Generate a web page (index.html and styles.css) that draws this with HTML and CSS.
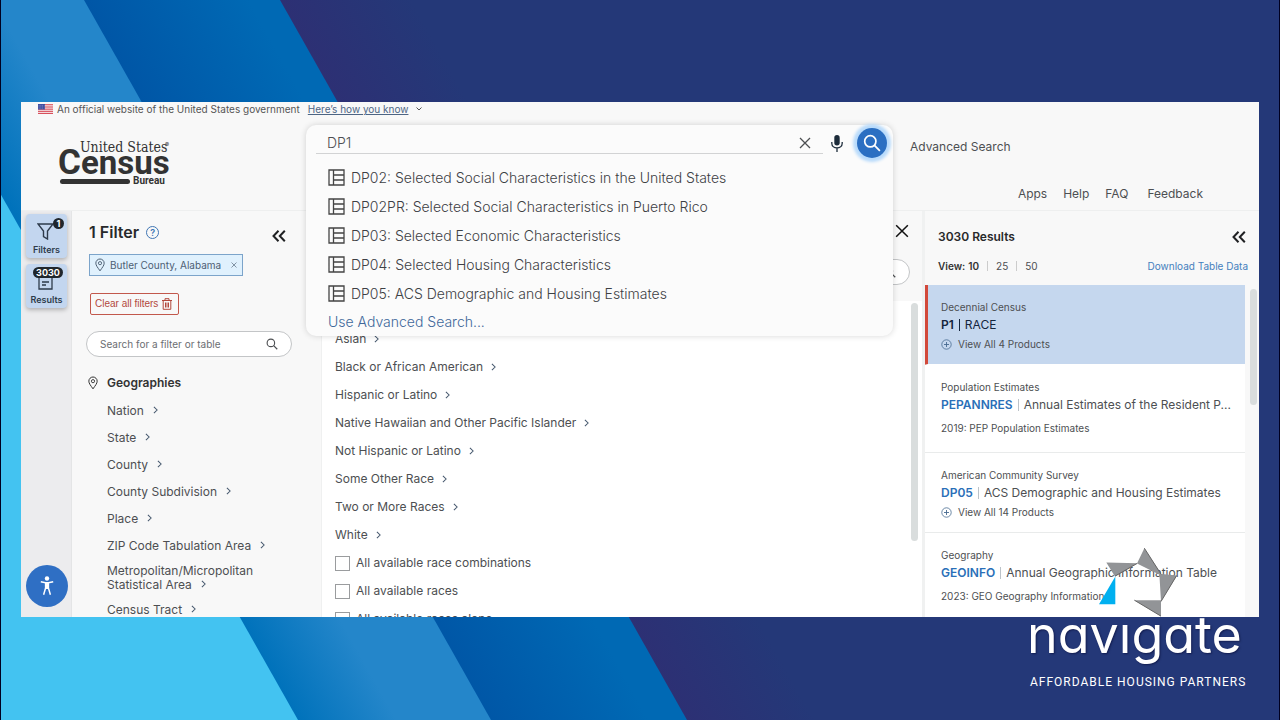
FILE: index.html
```html
<!DOCTYPE html>
<html lang="en">
<head>
<meta charset="utf-8">
<title>Census data search</title>
<link rel="stylesheet" href="styles.css">
</head>
<body>
<svg class="defs" aria-hidden="true">
  <symbol id="chev" viewBox="0 0 6 10"><path d="M1 1l4 4-4 4" fill="none" stroke="currentColor" stroke-width="1.3"/></symbol>
  <symbol id="pin" viewBox="0 0 12 16"><path d="M6 15C3.200 11 1 8.500 1 5.800a5 5 0 0 1 10 0C11 8.500 8.800 11 6 15z" fill="none" stroke="currentColor" stroke-width="1.200"/><circle cx="6" cy="5.800" r="1.900" fill="none" stroke="currentColor" stroke-width="1.100"/></symbol>
  <symbol id="lens" viewBox="0 0 16 16"><circle cx="6.500" cy="6.500" r="5" fill="none" stroke="currentColor" stroke-width="1.500"/><path d="M10.200 10.200L15 15" stroke="currentColor" stroke-width="1.600"/></symbol>
  <symbol id="tbl" viewBox="0 0 17 17"><path d="M1 1h15v15H1zM5.500 1v15M5.500 6H16M5.500 11H16" fill="none" stroke="currentColor" stroke-width="1.300"/></symbol>
  <symbol id="dbl" viewBox="0 0 14 12"><path d="M6.500 .8L1.500 6l5 5.200M12.800 .8L7.800 6l5 5.200" fill="none" stroke="currentColor" stroke-width="2"/></symbol>
  <symbol id="x" viewBox="0 0 12 12"><path d="M1 1l10 10M11 1L1 11" stroke="currentColor" stroke-width="1.300"/></symbol>
  <symbol id="plus" viewBox="0 0 11 11"><circle cx="5.500" cy="5.500" r="4.700" fill="none" stroke="currentColor" stroke-width=".8"/><path d="M5.500 3v5M3 5.500h5" stroke="currentColor" stroke-width=".9"/></symbol>
</svg>
<svg class="backdrop" viewBox="0 0 1280 720" preserveAspectRatio="none" aria-hidden="true">
  <defs>
    <linearGradient id="g1" gradientUnits="userSpaceOnUse" x1="270" y1="670" x2="345" y2="628"><stop offset="0" stop-color="#0072bb"/><stop offset="1" stop-color="#2486ca"/></linearGradient>
    <linearGradient id="g2" gradientUnits="userSpaceOnUse" x1="84" y1="0" x2="210" y2="-70"><stop offset="0" stop-color="#0056a6"/><stop offset="1" stop-color="#0069b4"/></linearGradient>
    <linearGradient id="g3" gradientUnits="userSpaceOnUse" x1="280" y1="0" x2="380" y2="-56"><stop offset="0" stop-color="#2d3074"/><stop offset="1" stop-color="#243878"/></linearGradient>
  </defs>
  <path fill="url(#g3)" d="M0 0h1280v720H0z"/>
  <path fill="url(#g2)" d="M0 0h280l407 720H0z"/>
  <path fill="url(#g1)" d="M0 0h84l407 720H0z"/>
  <path fill="#43c3f1" d="M0 193l298 527H0z"/>
  <path fill="#000020" d="M0 0h1v720H0zM1279 0h1v720h-1z"/>
</svg>

<div class="app">
  <header class="header">
    <div class="banner">
      <svg class="flag" viewBox="0 0 15 10"><path fill="#f3d9dc" d="M0 0h15v10H0z"/><path stroke="#d8505c" d="M0 .7h15M0 3h15M0 5.200h15M0 7.400h15M0 9.500h15"/><path fill="#3f4da0" d="M0 0h7v5.500H0z"/><path stroke="#a9afd8" stroke-width=".6" stroke-dasharray=".8 1" d="M.7 1.400h6M.7 2.800h6M.7 4.200h6"/></svg>
      <span>An official website of the United States government</span>
      <a href="#">Here’s how you know</a>
      <svg class="down" viewBox="0 0 6 4"><path d="M.5 .5L3 3 5.500 .5" fill="none" stroke="currentColor"/></svg>
    </div>
    <div class="masthead">
      <svg class="census" viewBox="0 0 116 50" role="img" aria-label="United States Census Bureau">
        <text x="21" y="14" class="c-top">United States</text><text x="106" y="9" class="c-reg">®</text>
        <text x="-1" y="36" class="c-main"><tspan class="c-cap">C</tspan>ensus</text>
        <rect x="1" y="41" width="70" height="5" rx="2.500"/>
        <text x="74" y="46" class="c-small">Bureau</text>
      </svg>
      <div class="search-slot">
        <form class="search" role="search">
          <div class="search-row">
            <div class="field">
              <input type="text" value="DP1" aria-label="Search">
              <button type="button" class="clear" aria-label="Clear"><svg><use href="#x"/></svg></button>
            </div>
            <button type="button" class="mic" aria-label="Voice search"><svg viewBox="0 0 12 17"><rect x="3.300" y="0" width="5.400" height="10.500" rx="2.700"/><path d="M.8 7v1.200c0 6.200 10.400 6.200 10.400 0V7M6 13v4" fill="none" stroke="currentColor" stroke-width="1.300"/></svg></button>
            <button type="submit" class="go" aria-label="Search"><svg><use href="#lens"/></svg></button>
          </div>
          <ul class="suggest">
            <li><button type="button"><svg><use href="#tbl"/></svg>DP02: Selected Social Characteristics in the United States</button></li>
            <li><button type="button"><svg><use href="#tbl"/></svg>DP02PR: Selected Social Characteristics in Puerto Rico</button></li>
            <li><button type="button"><svg><use href="#tbl"/></svg>DP03: Selected Economic Characteristics</button></li>
            <li><button type="button"><svg><use href="#tbl"/></svg>DP04: Selected Housing Characteristics</button></li>
            <li><button type="button"><svg><use href="#tbl"/></svg>DP05: ACS Demographic and Housing Estimates</button></li>
          </ul>
          <a class="adv" href="#">Use Advanced Search...</a>
        </form>
      </div>
      <div class="links">
        <a href="#">Advanced Search</a>
        <nav><a href="#">Apps</a><a href="#">Help</a><a href="#">FAQ</a><a class="feedback" href="#">Feedback</a></nav>
      </div>
    </div>
  </header>

  <main class="columns">
    <div class="rail">
      <button type="button" class="tab"><svg class="funnel" viewBox="0 0 17 17"><path d="M1 1h15l-5.500 7v8l-4-2.500V8z" fill="none" stroke="currentColor" stroke-width="1.400"/></svg><span class="count one">1</span>Filters</button>
      <button type="button" class="tab"><svg class="sheet" viewBox="0 0 15 16"><path d="M1 1h13v14H1zM4 8h7M4 11h4" fill="none" stroke="currentColor" stroke-width="1.300"/></svg><span class="count many">3030</span>Results</button>
      <button type="button" class="a11y" aria-label="Accessibility"><svg viewBox="0 0 14 20"><circle cx="7" cy="2.500" r="2.200"/><path d="M.8 5.800l4.700 1h3l4.700-1M5.600 7v5L3.600 18.800M8.400 7v5l2 6.800" fill="none" stroke="currentColor" stroke-width="1.500"/><path d="M5 6.500h4v6.500H5z"/></svg></button>
    </div>

    <aside class="filters">
      <div class="filters-head">
        <h2>1 Filter</h2>
        <button type="button" class="help" aria-label="Help">?</button>
        <button type="button" class="collapse" aria-label="Collapse"><svg><use href="#dbl"/></svg></button>
      </div>
      <button type="button" class="chip"><svg class="pin"><use href="#pin"/></svg>Butler County, Alabama<svg class="cx"><use href="#x"/></svg></button>
      <button type="button" class="clear-all">Clear all filters<svg viewBox="0 0 10 12"><path d="M0 2.500h10M3 2.500V.7h4v1.800M1.200 2.500v8.800h7.600V2.500M3.500 4.500v5M5 4.500v5M6.500 4.500v5" fill="none" stroke="currentColor"/></svg></button>
      <label class="find"><input type="text" placeholder="Search for a filter or table" aria-label="Search for a filter or table"><svg><use href="#lens"/></svg></label>
      <h3><svg class="pin"><use href="#pin"/></svg>Geographies</h3>
      <ul class="geo">
        <li><button type="button">Nation<svg><use href="#chev"/></svg></button></li>
        <li><button type="button">State<svg><use href="#chev"/></svg></button></li>
        <li><button type="button">County<svg><use href="#chev"/></svg></button></li>
        <li><button type="button">County Subdivision<svg><use href="#chev"/></svg></button></li>
        <li><button type="button">Place<svg><use href="#chev"/></svg></button></li>
        <li><button type="button">ZIP Code Tabulation Area<svg><use href="#chev"/></svg></button></li>
        <li class="two-line"><button type="button">Metropolitan/Micropolitan<br>Statistical Area<svg><use href="#chev"/></svg></button></li>
        <li><button type="button">Census Tract<svg><use href="#chev"/></svg></button></li>
      </ul>
    </aside>

    <section class="topics">
      <div class="topics-head">
        <button type="button" class="close" aria-label="Close"><svg><use href="#x"/></svg></button>
        <label class="find"><input type="text" aria-label="Search topics"><svg><use href="#lens"/></svg></label>
      </div>
      <ul class="races">
        <li><button type="button">Asian<svg><use href="#chev"/></svg></button></li>
        <li><button type="button">Black or African American<svg><use href="#chev"/></svg></button></li>
        <li><button type="button">Hispanic or Latino<svg><use href="#chev"/></svg></button></li>
        <li><button type="button">Native Hawaiian and Other Pacific Islander<svg><use href="#chev"/></svg></button></li>
        <li><button type="button">Not Hispanic or Latino<svg><use href="#chev"/></svg></button></li>
        <li><button type="button">Some Other Race<svg><use href="#chev"/></svg></button></li>
        <li><button type="button">Two or More Races<svg><use href="#chev"/></svg></button></li>
        <li><button type="button">White<svg><use href="#chev"/></svg></button></li>
        <li><label><input type="checkbox">All available race combinations</label></li>
        <li><label><input type="checkbox">All available races</label></li>
        <li><label><input type="checkbox">All available races alone</label></li>
      </ul>
      <span class="thumb thumb-topics"></span>
    </section>

    <section class="results">
      <div class="results-head">
        <h2>3030 Results</h2>
        <button type="button" class="collapse" aria-label="Collapse"><svg><use href="#dbl"/></svg></button>
      </div>
      <div class="view">
        <b>View:</b><button type="button" class="on">10</button><button type="button">25</button><button type="button">50</button>
        <a href="#">Download Table Data</a>
      </div>
      <div class="cards">
        <article class="card active">
          <p class="src">Decennial Census</p>
          <p class="name"><a href="#">P1</a><i></i>RACE</p>
          <p class="more"><svg><use href="#plus"/></svg>View All 4 Products</p>
        </article>
        <article class="card">
          <p class="src">Population Estimates</p>
          <p class="name"><a href="#">PEPANNRES</a><i></i>Annual Estimates of the Resident P...</p>
          <p class="year">2019: PEP Population Estimates</p>
        </article>
        <article class="card">
          <p class="src">American Community Survey</p>
          <p class="name"><a href="#">DP05</a><i></i>ACS Demographic and Housing Estimates</p>
          <p class="more"><svg><use href="#plus"/></svg>View All 14 Products</p>
        </article>
        <article class="card">
          <p class="src">Geography</p>
          <p class="name"><a href="#">GEOINFO</a><i></i>Annual Geographic Information Table</p>
          <p class="year">2023: GEO Geography Information</p>
        </article>
        <span class="thumb thumb-results"></span>
      </div>
    </section>
  </main>
</div>

<div class="brand">
  <svg viewBox="14 15 234 206"><path fill="#929497" d="M150 15l55 84-77-38zM36 58l94 2-68 40zM195 92l53 5-48 78zM120 171h80v48z"/><path fill="none" stroke="#666" stroke-width="3" d="M150 15l50 78M247 97l-47 78M128 61L62 99M120 171l80 48"/><path fill="#00b0f0" d="M63 100v83H14z"/></svg>
  <div class="word">navıgate</div>
  <div class="tag">AFFORDABLE HOUSING PARTNERS</div>
</div>
</body>
</html>
```

FILE: styles.css
```css
* { box-sizing: border-box; }
body {
  margin: 0;
  height: 100vh;
  padding: 102px 21px 103px;
  overflow: hidden;
  position: relative;
  font: 12px/16px Inter, "Liberation Sans", sans-serif;
  color: #4d4f52;
}
.defs { position: absolute; width: 0; height: 0; }
.backdrop { position: absolute; inset: 0; width: 100%; height: 100%; z-index: -1; }
button { font: inherit; color: inherit; background: none; border: 0; padding: 0; text-align: left; }
a { color: inherit; text-decoration: none; }
ul { list-style: none; margin: 0; padding: 0; }
h2, h3, p { margin: 0; }
input { font: inherit; color: inherit; }

.app { height: 100%; background: #f8f8f8; display: flex; flex-direction: column; overflow: hidden; }
.header { flex: none; border-bottom: 1px solid #eeefef; }
.banner { display: flex; align-items: center; height: 16px; padding: 0 0 2px 17px; font-size: 10px; line-height: 14px; gap: 4px; color: #555; }
.flag { width: 15px; height: 10px; }
.banner a { text-decoration: underline; color: #4d6584; margin-left: 4px; }
.down { width: 6px; height: 4px; margin-left: 4px; }
.masthead { display: grid; grid-template-columns: 285px 587px 1fr; height: 92px; }
.census { width: 116px; height: 50px; margin: 20px 0 0 38px; fill: #333; overflow: visible; }
.c-top { font: 14px "DejaVu Serif Condensed", "DejaVu Serif", serif; }
.c-reg { font: 6px Inter, sans-serif; }
.c-main { font: bold 33px Roboto, "Noto Sans", sans-serif; }
.c-cap { font-size: 35px; }
.c-small { font: bold 10px Roboto, sans-serif; }

.search-slot { position: relative; }
.search {
  position: absolute; z-index: 5; top: 7px; left: 0; right: 0;
  padding: 0 10px 3px;
  background: #fbfbfb;
  border-radius: 10px;
  box-shadow: 0 0 6px rgba(0,0,0,.16);
}
.search-row { display: flex; align-items: center; height: 36px; }
.field { flex: 1; display: flex; align-items: center; height: 21px; border-bottom: 1px solid #d2d3d4; margin-top: 1px; padding-right: 12px; }
.field input { flex: 1; min-width: 0; border: 0; background: none; padding: 0 0 0 11px; font-size: 14px; font-weight: 300; outline: 0; }
.clear { line-height: 0; }
.clear svg { width: 12px; height: 12px; }
.mic { width: 12px; height: 17px; margin: 0 14px 0 8px; line-height: 0; color: #1c2b3a; fill: currentColor; }
.mic svg { width: 12px; height: 17px; }
.go { width: 30px; height: 30px; margin-right: -4px; border-radius: 50%; background: #2b6fc2; color: #fff; display: grid; place-items: center; box-shadow: 0 0 3px 4px #b9dbfb; }
.go svg { width: 18px; height: 18px; }
.suggest { margin-top: 2px; }
.suggest button { display: flex; align-items: center; gap: 6px; height: 29px; padding-left: 12px; font-size: 14px; font-weight: 300; color: #3d4044; }
.suggest svg { width: 17px; height: 17px; color: #444; }
.adv { display: block; height: 22px; line-height: 22px; margin-top: 3px; padding-left: 12px; font-size: 14px; font-weight: 300; color: #40689a; }

.links { padding-left: 17px; display: flex; flex-direction: column; font-size: 12px; }
.links > a { margin-top: 21px; }
.links nav { display: flex; gap: 16px; margin-top: 31px; padding-right: 56px; justify-content: flex-end; font-size: 12px; }
.links .feedback { margin-left: 3px; }

.columns { flex: 1; min-height: 0; display: grid; grid-template-columns: 51px 250px minmax(0, 1fr) 337px; }
.columns > * { min-width: 0; min-height: 0; overflow: hidden; }
.rail { background: #ececee; border-right: 1px solid #e4e5e6; display: flex; flex-direction: column; padding: 3px 5px 10px; gap: 6px; }
.tab { position: relative; width: 41px; height: 44px; padding: 27px 0 0; text-align: center; font-weight: 600; font-size: 9px; line-height: 12px; background: #c3d6ef; border-radius: 4px; box-shadow: 0 2px 4px rgba(0,0,0,.25); color: #2e3b4b; }
.tab svg { position: absolute; left: 11px; top: 9px; width: 17px; height: 17px; }
.tab .sheet { left: 12px; top: 10px; width: 15px; height: 16px; }
.count { position: absolute; background: #20262c; color: #fff; border-radius: 6px; font-size: 9px; font-weight: 700; line-height: 11px; }
.one { right: 3px; top: 4px; width: 11px; }
.many { left: 7px; top: 3px; width: 30px; }
.a11y { margin-top: auto; width: 42px; height: 42px; border-radius: 50%; background: #2f6fc4; color: #fff; fill: #fff; display: grid; place-items: center; }
.a11y svg { width: 14px; height: 20px; }

.filters { padding: 11px 13px 0 14px; display: flex; flex-direction: column; align-items: flex-start; border-right: 1px solid #eff0f0; }
.filters-head { display: flex; align-items: center; width: 100%; padding-left: 3px; height: 20px; }
h2 { font-size: 16px; line-height: 20px; font-weight: 600; color: #28292b; }
.help { width: 13px; height: 13px; border: 1px solid #4076b4; border-radius: 50%; color: #4076b4; font-size: 9px; line-height: 11px; text-align: center; margin-left: 7px; font-weight: 600; }
.collapse { margin-left: auto; line-height: 0; color: #202123; }
.collapse svg { width: 14px; height: 12px; }
.filters .collapse { margin: 7px 22px 0 auto; }
.chip { display: flex; align-items: center; height: 22px; margin: 12px 0 0 3px; padding: 0 5px; font-size: 10px; background: #e0f1fd; border: 1px solid #7ca4ca; color: #4d6074; white-space: nowrap; }
.chip .pin { width: 10px; height: 14px; margin-right: 5px; }
.cx { width: 6px; height: 6px; margin-left: 10px; }
.clear-all { display: flex; align-items: center; height: 22px; margin: 17px 0 0 4px; padding: 0 6px 0 4px; font-family: "Liberation Sans", sans-serif; font-size: 10px; border: 1px solid #c2584c; border-radius: 2px; color: #b3483c; white-space: nowrap; }
.clear-all svg { width: 10px; height: 12px; margin-left: 4px; }
.find { display: flex; align-items: center; border: 1px solid #c3c5c7; border-radius: 13px; background: #fff; height: 26px; padding: 0 13px; }
.find input { border: 0; background: none; flex: 1; min-width: 0; padding: 0; font-size: 10px; outline: 0; }
.find input::placeholder { color: #6b6e72; opacity: 1; }
.find svg { width: 12px; height: 12px; }
.filters .find { width: 206px; margin: 16px 0 0; }
h3 { display: flex; align-items: center; gap: 9px; padding-left: 2px; margin-top: 18px; font-size: 12px; line-height: 16px; font-weight: 600; color: #333; }
h3 .pin { width: 10px; height: 14px; }
.geo { margin: 13px 0 0 21px; display: flex; flex-direction: column; gap: 13px; }
.geo li { line-height: 14px; height: 14px; white-space: nowrap; font-size: 12px; }
.geo .two-line { height: 28px; margin: -2px 0; }
.geo button, .races button { display: block; }
.geo svg, .races svg { width: 5px; height: 8px; margin-left: 9px; color: #46586e; }
.geo svg { vertical-align: 1px; }
.races svg { margin-left: 8px; }

.topics { position: relative; display: flex; flex-direction: column; background: #fff; }
.topics-head { height: 90px; background: #f8f8f8; padding: 13px 12px 0; display: flex; flex-direction: column; flex: none; }
.close { align-self: flex-end; margin-right: 1px; line-height: 0; color: #111; }
.close svg { width: 14px; height: 14px; }
.topics .find { margin-top: 21px; }
.races { padding: 24px 13px 0; }
.races li { height: 28px; line-height: 28px; font-size: 12px; }
.races label { display: flex; align-items: center; gap: 6px; height: 28px; }
.races input { appearance: none; width: 15px; height: 15px; margin: 0; border: 1px solid #9a9c9e; background: #fff; }
.thumb { position: absolute; width: 7px; border-radius: 4px; background: #d9dddd; }
.thumb-topics { right: 4px; top: 92px; height: 238px; }
.thumb-results { right: 2px; top: 4px; height: 116px; }

.results { border-left: 3px solid #f0f1f1; display: flex; flex-direction: column; }
.results-head { display: flex; align-items: center; padding: 0 13px; margin-top: 16px; height: 20px; }
.results h2 { font-size: 12px; font-weight: 600; }
.view { display: flex; align-items: center; height: 20px; margin-top: 9px; padding: 0 11px 0 13px; font-size: 10px; line-height: 10px; }
.view b { font-weight: 600; color: #333; }
.view button { padding: 0 8px; border-left: 1px solid #ccc; }
.view .on { font-weight: 600; color: #333; border: 0; padding-left: 3px; }
.view a { margin-left: auto; color: #4580bd; }
.cards { position: relative; flex: 1; min-height: 0; margin-top: 9px; padding-right: 14px; }
.card { padding: 14px 10px 11px 16px; background: #fff; border-bottom: 1px solid #e9ebeb; white-space: nowrap; }
.card.active { background: #c5d7ee; border-left: 4px solid #d2493a; padding-left: 13px; margin-left: -1px; border-bottom-color: #fff; }
.src { font-size: 10px; line-height: 16px; }
.name { font-size: 12px; line-height: 20px; display: flex; align-items: center; }
.name a { font-weight: 600; color: #2a6fb8; }
.name i { width: 1px; height: 12px; background: #bcc3c9; margin: 0 5px; }
.active .name, .active .name a { color: #14253d; }
.active i { background: #14253d; }
.more { display: flex; align-items: center; gap: 6px; font-size: 10px; line-height: 18px; }
.more svg { width: 11px; height: 11px; color: #46698f; }
.year { margin: 4px 0; font-size: 10px; line-height: 18px; }

.brand { position: absolute; right: 33px; bottom: 30px; width: 217px; color: #fff; z-index: 8; }
.brand svg { display: block; width: 78px; height: 69px; margin-left: 69px; overflow: visible; }
.word { font-size: 52px; line-height: 36px; height: 57px; margin-left: -3px; font-feature-settings: "cv11"; text-shadow: 1px 1px 2px rgba(0,0,40,.5); }
.tag { font: 12px/16px Roboto, sans-serif; letter-spacing: 1px; white-space: nowrap; }
```
